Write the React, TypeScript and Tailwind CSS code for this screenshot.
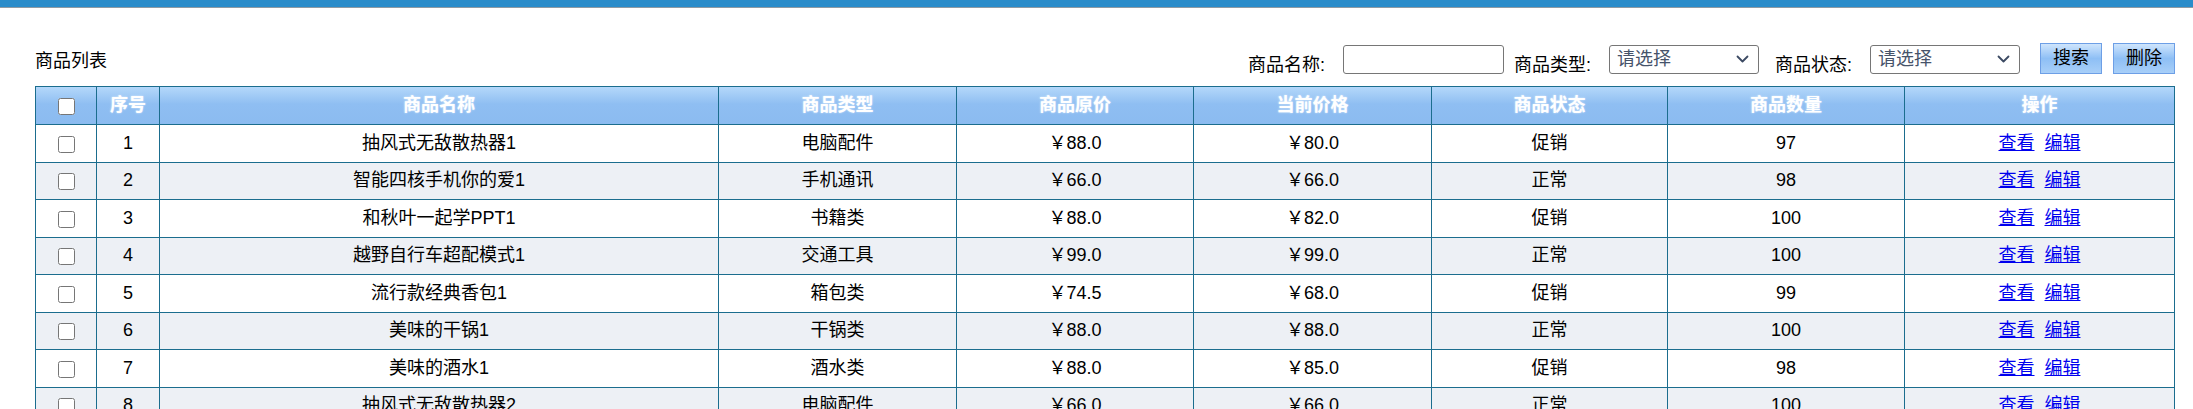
import React from "react";

type Product = {
  id: number;
  name: string;
  category: string;
  price: string;
  current: string;
  status: string;
  stock: number;
};

const products: Product[] = [
  { id: 1, name: "抽风式无敌散热器1", category: "电脑配件", price: "88.0", current: "80.0", status: "促销", stock: 97 },
  { id: 2, name: "智能四核手机你的爱1", category: "手机通讯", price: "66.0", current: "66.0", status: "正常", stock: 98 },
  { id: 3, name: "和秋叶一起学PPT1", category: "书籍类", price: "88.0", current: "82.0", status: "促销", stock: 100 },
  { id: 4, name: "越野自行车超配模式1", category: "交通工具", price: "99.0", current: "99.0", status: "正常", stock: 100 },
  { id: 5, name: "流行款经典香包1", category: "箱包类", price: "74.5", current: "68.0", status: "促销", stock: 99 },
  { id: 6, name: "美味的干锅1", category: "干锅类", price: "88.0", current: "88.0", status: "正常", stock: 100 },
  { id: 7, name: "美味的酒水1", category: "酒水类", price: "88.0", current: "85.0", status: "促销", stock: 98 },
  { id: 8, name: "抽风式无敌散热器2", category: "电脑配件", price: "66.0", current: "66.0", status: "正常", stock: 100 },
];

const headers = ["序号", "商品名称", "商品类型", "商品原价", "当前价格", "商品状态", "商品数量", "操作"];

function Chevron() {
  return (
    <svg className="pointer-events-none absolute right-[10px] top-[10px] h-[9px] w-[13px]" viewBox="0 0 13 9" fill="none">
      <path d="M1.5 1.5 L6.5 6.5 L11.5 1.5" stroke="#3c4a63" strokeWidth="1.8" strokeLinecap="round" strokeLinejoin="round" />
    </svg>
  );
}

function FakeSelect() {
  return (
    <div className="relative mt-[2px] h-[29px] w-[150px]">
      <select className="h-full w-full appearance-none rounded-[3px] border border-[#767676] bg-white pl-[7px] text-[18px] leading-[27px] text-[#46536a] outline-none">
        <option>请选择</option>
      </select>
      <Chevron />
    </div>
  );
}

function ActionButton({ label, className = "" }: { label: string; className?: string }) {
  return (
    <button
      className={`h-[31px] w-[62px] border border-[#6d9fe6] bg-gradient-to-b from-[#cfe5fc] via-[#8ebff5] to-[#a8cff8] text-[18px] leading-[29px] text-black ${className}`}
    >
      {label}
    </button>
  );
}

function Label({ text, className = "" }: { text: string; className?: string }) {
  return <span className={`mt-[10px] leading-[24px] ${className}`}>{text}</span>;
}

export default function App() {
  return (
    <div className="min-h-[409px] bg-white font-['Liberation_Sans','Noto_Sans_CJK_SC',sans-serif] text-[18px] text-black">
      <div className="h-[8px] border-b border-[#8e9aa3] bg-[#2a8cca]" />

      <div className="ml-[35px] w-[2139px]">
        <div className="mt-[35px] flex h-[31px] items-start justify-between">
          <span className="pt-[6px] leading-[24px]">商品列表</span>
          <div className="mr-[-1px] flex items-start">
            <Label text="商品名称:" className="mr-[18px]" />
            <input className="mt-[2px] h-[29px] w-[161px] rounded-[3px] border border-[#767676] bg-white outline-none" />
            <Label text="商品类型:" className="ml-[10px] mr-[18px]" />
            <FakeSelect />
            <Label text="商品状态:" className="ml-[16px] mr-[18px]" />
            <FakeSelect />
            <ActionButton label="搜索" className="ml-[20px]" />
            <ActionButton label="删除" className="ml-[11px]" />
          </div>
        </div>

        <table className="mt-[12px] w-[2139px] table-fixed border-collapse border border-[#1b6d8e] text-center">
          <colgroup>
            <col className="w-[61px]" />
            <col className="w-[63px]" />
            <col className="w-[559px]" />
            <col className="w-[238px]" />
            <col className="w-[237px]" />
            <col className="w-[238px]" />
            <col className="w-[236px]" />
            <col className="w-[237px]" />
            <col className="w-[270px]" />
          </colgroup>
          <thead>
            <tr className="h-[38px] bg-gradient-to-b from-[#b4d8fa] via-[#8fbef2] via-45% to-[#8bbbf0]">
              <th className="border border-[#1b6d8e] p-0">
                <input type="checkbox" className="m-0 h-[17px] w-[17px] align-middle" />
              </th>
              {headers.map((h) => (
                <th
                  key={h}
                  className="border border-[#1b6d8e] p-0 font-bold text-white [text-shadow:0_0_2px_rgba(235,245,255,0.9)]"
                >
                  {h}
                </th>
              ))}
            </tr>
          </thead>
          <tbody>
            {products.map((p, i) => (
              <tr key={p.id} className={`h-[37.5px] ${i % 2 === 1 ? "bg-[#edf0f5]" : "bg-white"}`}>
                <td className="border border-[#1b6d8e] p-0">
                  <input type="checkbox" className="m-0 h-[17px] w-[17px] align-middle" />
                </td>
                <td className="border border-[#1b6d8e] p-0">{p.id}</td>
                <td className="border border-[#1b6d8e] p-0">{p.name}</td>
                <td className="border border-[#1b6d8e] p-0">{p.category}</td>
                <td className="border border-[#1b6d8e] p-0">￥{p.price}</td>
                <td className="border border-[#1b6d8e] p-0">￥{p.current}</td>
                <td className="border border-[#1b6d8e] p-0">{p.status}</td>
                <td className="border border-[#1b6d8e] p-0">{p.stock}</td>
                <td className="border border-[#1b6d8e] p-0">
                  <a href="#" className="text-[#0000ee] underline">查看</a>
                  <a href="#" className="ml-[10px] text-[#0000ee] underline">编辑</a>
                </td>
              </tr>
            ))}
          </tbody>
        </table>
      </div>
    </div>
  );
}
